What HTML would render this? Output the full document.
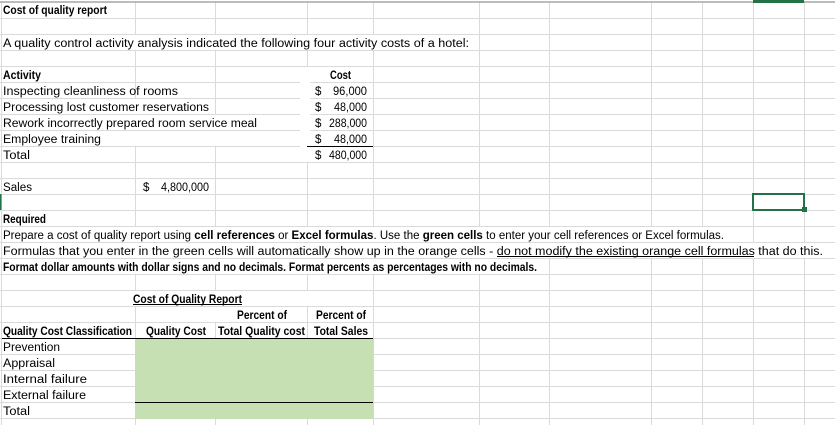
<!DOCTYPE html>
<html><head><meta charset="utf-8"><style>
html,body{margin:0;padding:0;background:#fff;width:835px;height:425px;overflow:hidden}
svg{display:block}
text{font-family:"Liberation Sans",sans-serif;font-size:11.5px;fill:#000}
.b{font-weight:bold;font-size:11.5px}
</style></head><body>
<svg width="835" height="425" xmlns="http://www.w3.org/2000/svg">
<g stroke="#dadada" stroke-width="1" shape-rendering="crispEdges">
<line x1="0" y1="18.5" x2="835" y2="18.5"/><line x1="0" y1="34.5" x2="835" y2="34.5"/><line x1="0" y1="50.5" x2="835" y2="50.5"/><line x1="0" y1="66.5" x2="835" y2="66.5"/><line x1="0" y1="82.5" x2="835" y2="82.5"/><line x1="0" y1="98.5" x2="835" y2="98.5"/><line x1="0" y1="114.5" x2="835" y2="114.5"/><line x1="0" y1="130.5" x2="835" y2="130.5"/><line x1="0" y1="146.5" x2="835" y2="146.5"/><line x1="0" y1="162.5" x2="835" y2="162.5"/><line x1="0" y1="178.5" x2="835" y2="178.5"/><line x1="0" y1="194.5" x2="835" y2="194.5"/><line x1="0" y1="210.5" x2="835" y2="210.5"/><line x1="0" y1="226.5" x2="835" y2="226.5"/><line x1="0" y1="242.5" x2="835" y2="242.5"/><line x1="0" y1="258.5" x2="835" y2="258.5"/><line x1="0" y1="274.5" x2="835" y2="274.5"/><line x1="0" y1="290.5" x2="835" y2="290.5"/><line x1="0" y1="306.5" x2="835" y2="306.5"/><line x1="0" y1="322.5" x2="835" y2="322.5"/><line x1="0" y1="338.5" x2="835" y2="338.5"/><line x1="0" y1="354.5" x2="835" y2="354.5"/><line x1="0" y1="370.5" x2="835" y2="370.5"/><line x1="0" y1="386.5" x2="835" y2="386.5"/><line x1="0" y1="402.5" x2="835" y2="402.5"/><line x1="0" y1="418.5" x2="835" y2="418.5"/>
<line x1="1.5" y1="2" x2="1.5" y2="425"/>
<line x1="135.5" y1="2" x2="135.5" y2="425"/><line x1="215.5" y1="2" x2="215.5" y2="425"/><line x1="307.5" y1="2" x2="307.5" y2="425"/><line x1="373.5" y1="2" x2="373.5" y2="425"/><line x1="479.5" y1="2" x2="479.5" y2="425"/><line x1="549.5" y1="2" x2="549.5" y2="425"/><line x1="651.5" y1="2" x2="651.5" y2="425"/><line x1="702.5" y1="2" x2="702.5" y2="425"/><line x1="753.5" y1="2" x2="753.5" y2="425"/><line x1="804.5" y1="2" x2="804.5" y2="425"/>
</g>
<line x1="0" y1="2" x2="835" y2="2" stroke="#a6a6a6" stroke-width="1.5"/>
<rect x="753" y="0" width="51" height="3" fill="#217346"/>
<g fill="#fff">
<rect x="2" y="35" width="470" height="15"/>
<rect x="120" y="99" width="70" height="15"/>
<rect x="120" y="115" width="100" height="15"/>
<rect x="120" y="131" width="140" height="15"/>
<rect x="300" y="67" width="10" height="95"/>
<rect x="2" y="227" width="726" height="15"/>
<rect x="2" y="243" width="824" height="15"/>
<rect x="2" y="259" width="540" height="15"/>
<rect x="2" y="291" width="371" height="15"/>
<rect x="210" y="307" width="10" height="15"/>
</g>
<rect x="135" y="339" width="238.5" height="80" fill="#c6e0b4"/>
<line x1="307" y1="146.5" x2="373" y2="146.5" stroke="#000" stroke-width="1" shape-rendering="crispEdges"/>
<line x1="2" y1="338.5" x2="373" y2="338.5" stroke="#000" stroke-width="1" shape-rendering="crispEdges"/>
<line x1="135" y1="402.5" x2="373" y2="402.5" stroke="#000" stroke-width="1" shape-rendering="crispEdges"/>
<rect x="753" y="194" width="51" height="16" fill="none" stroke="#217346" stroke-width="2"/>
<rect x="802" y="207" width="5" height="5" fill="#217346"/>
<rect x="0" y="194" width="1.5" height="16" fill="#217346"/>

<text class="b" x="3" y="14" textLength="104" lengthAdjust="spacingAndGlyphs">Cost of quality report</text>
<text x="3" y="47" textLength="466" lengthAdjust="spacingAndGlyphs">A quality control activity analysis indicated the following four activity costs of a hotel:</text>
<text class="b" x="3" y="79" textLength="38" lengthAdjust="spacingAndGlyphs">Activity</text>
<text class="b" x="330" y="79" textLength="21" lengthAdjust="spacingAndGlyphs">Cost</text>
<text x="3" y="95" textLength="175" lengthAdjust="spacingAndGlyphs">Inspecting cleanliness of rooms</text>
<text x="3" y="111" textLength="206" lengthAdjust="spacingAndGlyphs">Processing lost customer reservations</text>
<text x="3" y="127" textLength="254" lengthAdjust="spacingAndGlyphs">Rework incorrectly prepared room service meal</text>
<text x="3" y="143" textLength="98" lengthAdjust="spacingAndGlyphs">Employee training</text>
<text x="3" y="159" textLength="27" lengthAdjust="spacingAndGlyphs">Total</text>
<text x="315" y="95">$</text><text x="333" y="95" textLength="34" lengthAdjust="spacingAndGlyphs">96,000</text>
<text x="315" y="111">$</text><text x="334" y="111" textLength="33" lengthAdjust="spacingAndGlyphs">48,000</text>
<text x="315" y="127">$</text><text x="329" y="127" textLength="38" lengthAdjust="spacingAndGlyphs">288,000</text>
<text x="315" y="143">$</text><text x="334" y="143" textLength="33" lengthAdjust="spacingAndGlyphs">48,000</text>
<text x="315" y="159">$</text><text x="329" y="159" textLength="38" lengthAdjust="spacingAndGlyphs">480,000</text>
<text x="3" y="191" textLength="29" lengthAdjust="spacingAndGlyphs">Sales</text>
<text x="143" y="191">$</text><text x="161" y="191" textLength="48" lengthAdjust="spacingAndGlyphs">4,800,000</text>
<text class="b" x="3" y="223" textLength="43" lengthAdjust="spacingAndGlyphs">Required</text>
<text x="3" y="239" textLength="721" lengthAdjust="spacingAndGlyphs">Prepare a cost of quality report using <tspan font-weight="bold">cell references</tspan> or <tspan font-weight="bold">Excel formulas</tspan>. Use the <tspan font-weight="bold">green cells</tspan> to enter your cell references or Excel formulas.</text>
<text x="3" y="255" textLength="820" lengthAdjust="spacingAndGlyphs">Formulas that you enter in the green cells will automatically show up in the orange cells - do not modify the existing orange cell formulas that do this.</text>
<line x1="497" y1="256.5" x2="754" y2="256.5" stroke="#000" stroke-width="1"/>
<text class="b" x="3" y="271" textLength="534" lengthAdjust="spacingAndGlyphs">Format dollar amounts with dollar signs and no decimals. Format percents as percentages with no decimals.</text>
<text class="b" x="133" y="303" textLength="109" lengthAdjust="spacingAndGlyphs">Cost of Quality Report</text>
<line x1="133" y1="304.5" x2="242" y2="304.5" stroke="#000" stroke-width="1"/>
<text class="b" x="237" y="319" textLength="50" lengthAdjust="spacingAndGlyphs">Percent of</text>
<text class="b" x="316" y="319" textLength="50" lengthAdjust="spacingAndGlyphs">Percent of</text>
<text class="b" x="3" y="335" textLength="129" lengthAdjust="spacingAndGlyphs">Quality Cost Classification</text>
<text class="b" x="146" y="335" textLength="60" lengthAdjust="spacingAndGlyphs">Quality Cost</text>
<text class="b" x="218" y="335" textLength="87" lengthAdjust="spacingAndGlyphs">Total Quality cost</text>
<text class="b" x="314" y="335" textLength="54" lengthAdjust="spacingAndGlyphs">Total Sales</text>
<text x="3" y="351" textLength="57" lengthAdjust="spacingAndGlyphs">Prevention</text>
<text x="3" y="367" textLength="52" lengthAdjust="spacingAndGlyphs">Appraisal</text>
<text x="3" y="383" textLength="84" lengthAdjust="spacingAndGlyphs">Internal failure</text>
<text x="3" y="399" textLength="83" lengthAdjust="spacingAndGlyphs">External failure</text>
<text x="3" y="415" textLength="27" lengthAdjust="spacingAndGlyphs">Total</text>
</svg>
</body></html>
